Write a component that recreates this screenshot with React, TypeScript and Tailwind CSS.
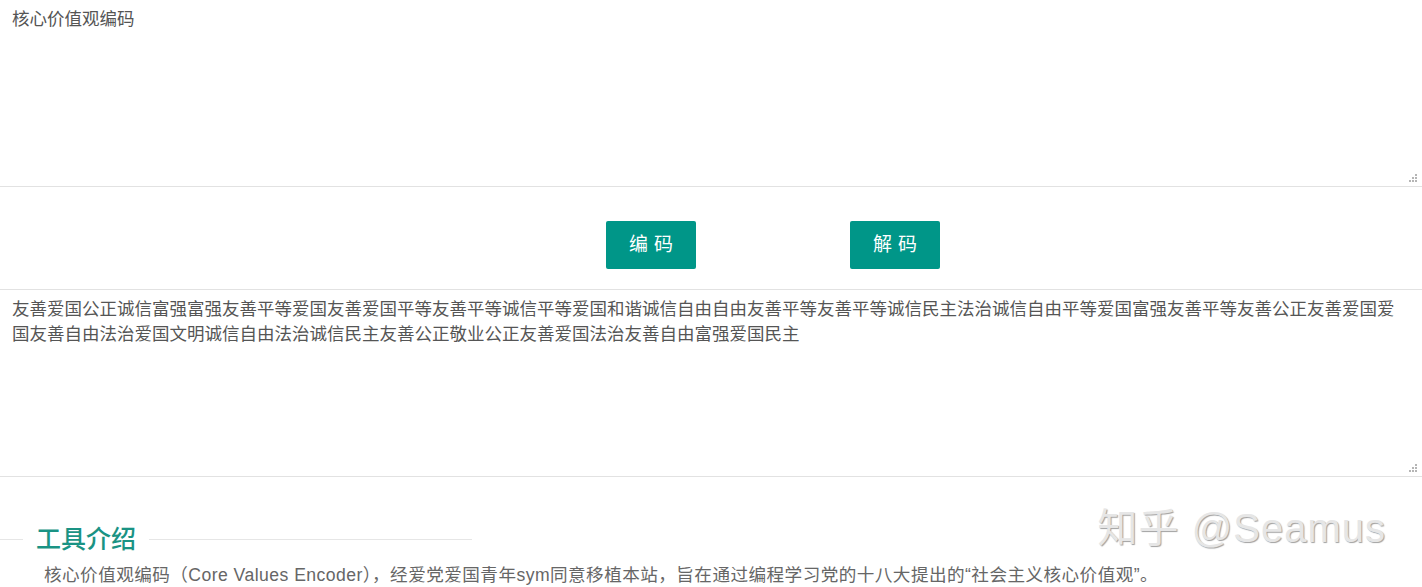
import { useState } from 'react';

const sample =
  '友善爱国公正诚信富强富强友善平等爱国友善爱国平等友善平等诚信平等爱国和谐诚信自由自由友善平等友善平等诚信民主法治诚信自由平等爱国富强友善平等友善公正友善爱国爱国友善自由法治爱国文明诚信自由法治诚信民主友善公正敬业公正友善爱国法治友善自由富强爱国民主';

const areaClass =
  'block w-full h-[188px] resize-none border border-[#e2e2e2] bg-white px-[12px] py-[7px] text-[17.5px] leading-[25px] text-[#555] outline-none';

const btnClass =
  'h-[48px] w-[90px] rounded-[2px] bg-[#009688] pl-[6px] text-[19px] tracking-[6px] text-white';

function Grip() {
  return (
    <svg
      className="pointer-events-none absolute bottom-[4px] right-[5px]"
      width="9"
      height="9"
      viewBox="0 0 9 9"
      fill="#b5b5b5"
    >
      <rect x="6" y="0" width="2" height="2" />
      <rect x="3" y="3" width="2" height="2" />
      <rect x="6" y="3" width="2" height="2" />
      <rect x="0" y="6" width="2" height="2" />
      <rect x="3" y="6" width="2" height="2" />
      <rect x="6" y="6" width="2" height="2" />
    </svg>
  );
}

function Area({ value, onChange }: { value: string; onChange: (v: string) => void }) {
  return (
    <div className="relative -mx-px">
      <textarea
        className={areaClass}
        style={{ fontFamily: '"Liberation Serif", "Noto Sans CJK SC", serif' }}
        value={value}
        onChange={(e) => onChange(e.target.value)}
      />
      <Grip />
    </div>
  );
}

export default function App() {
  const [plain, setPlain] = useState('核心价值观编码');
  const [coded, setCoded] = useState(sample);

  return (
    <div
      className="relative flex h-[587px] w-full flex-col overflow-hidden bg-white -mt-px"
      style={{ fontFamily: '"Liberation Sans", "Noto Sans CJK SC", sans-serif' }}
    >
      <Area value={plain} onChange={setPlain} />

      <div className="flex gap-[154px] pb-[20px] pl-[606px] pt-[34px]">
        <button className={btnClass}>编码</button>
        <button className={btnClass}>解码</button>
      </div>

      <Area value={coded} onChange={setCoded} />

      <fieldset className="mt-[47px] w-[472px] border-0 border-t border-[#e6e6e6] p-0">
        <legend className="ml-[23px] px-[13px] text-[25px] leading-[30px] font-medium text-[#1a9384]">
          工具介绍
        </legend>
      </fieldset>
      <p className="pl-[44px] pt-[9px] text-[17.6px] leading-[24px] tracking-[0.45px] text-[#666]">
        核心价值观编码（Core Values Encoder），经爱党爱国青年sym同意移植本站，旨在通过编程学习党的十八大提出的“社会主义核心价值观”。
      </p>

      {/* watermark */}
      <div className="pointer-events-none absolute right-[36px] top-[503px] text-[40px] leading-[52px] tracking-[1px] text-[#e6e6e6] [text-shadow:1px_1px_1px_#a0a0a0]">
        知乎 @Seamus
      </div>
    </div>
  );
}
